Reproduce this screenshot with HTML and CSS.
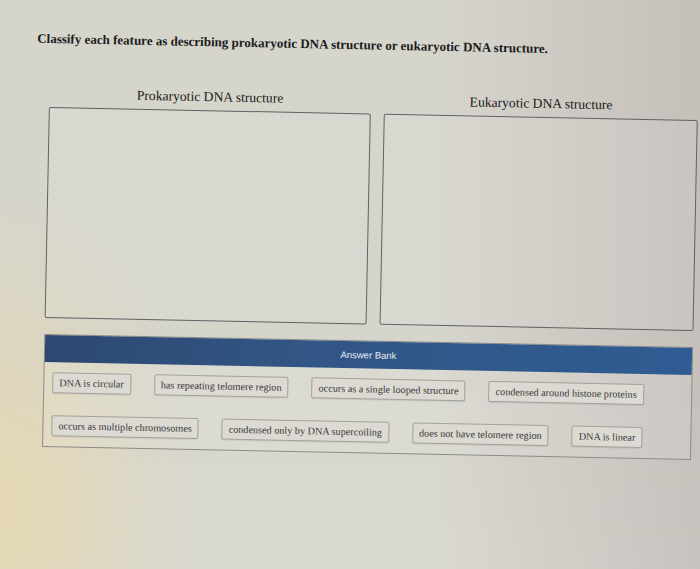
FILE: index.html
```html
<!DOCTYPE html>
<html lang="en">
<head>
    <meta charset="UTF-8">
    <meta name="viewport" content="width=device-width, initial-scale=1.0">
    <title>Classify DNA Structure</title>
    <link rel="stylesheet" href="styles.css">
</head>
<body>
    <div class="page">
        <p class="prompt">Classify each feature as describing prokaryotic DNA structure or eukaryotic DNA structure.</p>

        <div class="board">
            <div class="bins">
                <section class="bin">
                    <h2 class="bin-title">Prokaryotic DNA structure</h2>
                    <div class="bin-drop"></div>
                </section>
                <section class="bin">
                    <h2 class="bin-title">Eukaryotic DNA structure</h2>
                    <div class="bin-drop"></div>
                </section>
            </div>

            <div class="bank">
                <div class="bank-head">Answer Bank</div>
                <div class="bank-items">
                    <span class="chip">DNA is circular</span>
                    <span class="chip">has repeating telomere region</span>
                    <span class="chip">occurs as a single looped structure</span>
                    <span class="chip">condensed around histone proteins</span>
                    <span class="chip">occurs as multiple chromosomes</span>
                    <span class="chip">condensed only by DNA supercoiling</span>
                    <span class="chip">does not have telomere region</span>
                    <span class="chip">DNA is linear</span>
                </div>
            </div>
        </div>
    </div>
</body>
</html>
```

FILE: styles.css
```css
html, body { margin: 0; height: 100%; overflow: hidden; }
body {
    font-family: "Liberation Serif", "Times New Roman", serif;
    color: #222;
    background:
        radial-gradient(ellipse 280px 460px at 0% 90%, rgba(236, 216, 160, 0.6), rgba(236, 216, 160, 0) 70%),
        linear-gradient(90deg, rgba(0, 0, 0, 0) 62%, rgba(140, 115, 125, 0.22) 100%),
        linear-gradient(180deg, rgba(0, 0, 0, 0) 55%, rgba(255, 255, 255, 0.1) 100%),
        #d6d5cc;
}

/* the whole sheet sits slightly tilted */
.page { width: 700px; padding-top: 30px; transform: rotate(1.15deg); transform-origin: 0 0; }

.prompt { margin: 0 0 0 38px; font-size: 13px; line-height: 16px; font-weight: bold; color: #1c1c1c; }

.board { margin: 39px 0 0 51px; width: 649px; }

.bins { display: grid; grid-template-columns: 322px 1fr; column-gap: 13px; }
.bin-title { margin: 0 0 5px; font-size: 13.6px; line-height: 16px; font-weight: normal; text-align: center; color: #1a1a1a; }
.bin-drop { height: 209px; border: 1px solid #5f6266; border-radius: 2px; background-color: rgba(255, 255, 255, 0.08); }

.bank { margin-top: 16px; border: 1px solid #8c8c88; background-color: rgba(255, 255, 255, 0.1); }
.bank-head {
    height: 27px; line-height: 27px; text-align: center;
    font-family: "Liberation Sans", Arial, sans-serif; font-size: 9.5px; color: #e6ecf2;
    background: linear-gradient(90deg, #2d4870 0%, #325685 40%, #2f5c93 100%);
}
.bank-items { display: flex; flex-wrap: wrap; column-gap: 23px; row-gap: 22px; padding: 10px 8px 10px 8px; }

.chip {
    height: 19px; line-height: 19px; padding: 0 6px;
    font-size: 10.2px; color: #383838; white-space: nowrap;
    border: 1px solid #a2a29e; border-radius: 2px;
    background-color: #dcdad3; box-shadow: 0 1px 1px rgba(0, 0, 0, 0.08);
}
```
